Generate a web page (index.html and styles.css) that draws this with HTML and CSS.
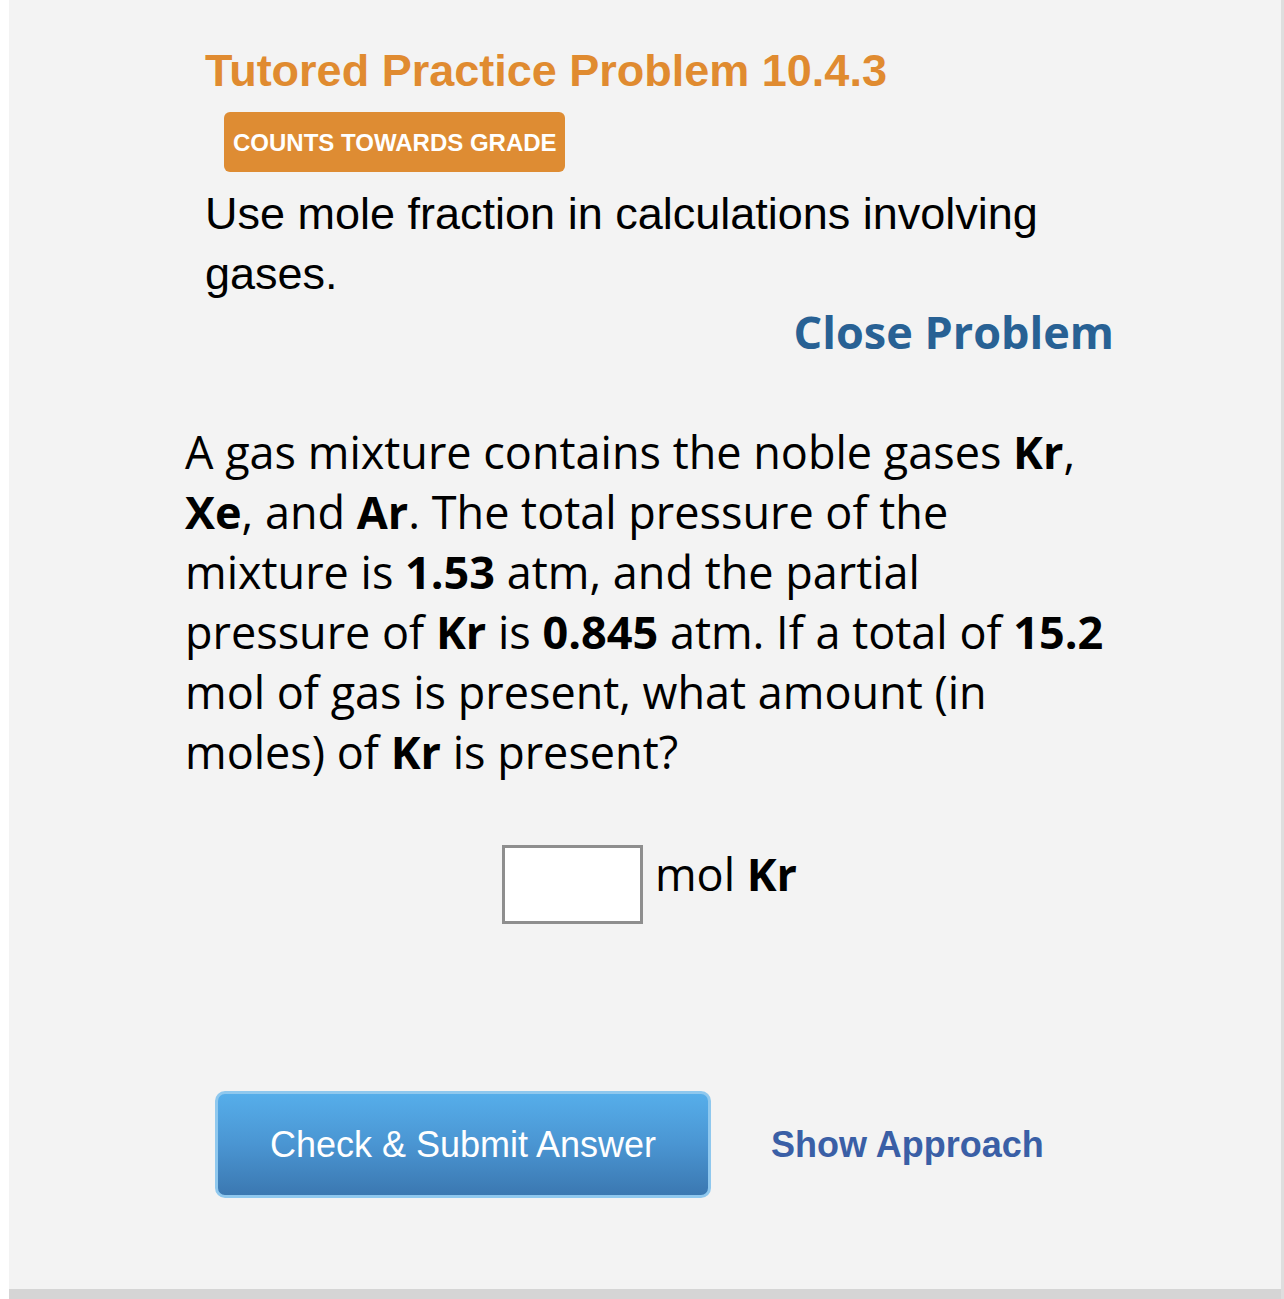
FILE: index.html
```html
<!DOCTYPE html>
<html lang="en">
<head>
<meta charset="utf-8">
<title>Tutored Practice Problem 10.4.3</title>
<link rel="stylesheet" href="styles.css">
</head>
<body>
<div class="page">
  <main class="panel">
    <div class="content">
      <header class="header">
        <h1 class="title">Tutored Practice Problem 10.4.3</h1>
        <span class="badge">COUNTS TOWARDS GRADE</span>
        <p class="objective">Use mole fraction in calculations involving gases.</p>
      </header>
      <div class="close-row"><a class="close-link" href="#">Close Problem</a></div>
      <p class="question">A gas mixture contains the noble gases <b>Kr</b>, <b>Xe</b>, and <b>Ar</b>. The total pressure of the mixture is <b>1.53</b> atm, and the partial pressure of <b>Kr</b> is <b>0.845</b> atm. If a total of <b>15.2</b> mol of gas is present, what amount (in moles) of <b>Kr</b> is present?</p>
      <div class="answer-row">
        <input class="answer-input" type="text" aria-label="answer">
        <span class="unit">mol <b>Kr</b></span>
      </div>
      <div class="actions">
        <button class="submit-btn" type="button">Check &amp; Submit Answer</button>
        <a class="approach-link" href="#">Show Approach</a>
      </div>
    </div>
  </main>
  <div class="edge"></div>
</div>
</body>
</html>
```
FILE: styles.css
```css
html, body {
  margin: 0;
  padding: 0;
  background: #ffffff;
}
body {
  padding-left: 9px;
}
.page {
  display: flex;
  align-items: flex-start;
}
.panel {
  width: 1272px;
  height: 1289px;
  background: #f3f3f3;
  border-bottom: 10px solid #d5d5d5;
}
.edge {
  width: 3px;
  height: 1299px;
  background: #dedede;
}
.content {
  margin-left: 176px;
  width: 929px;
}
.header {
  padding-left: 20px;
  padding-top: 45px;
}
.title {
  margin: 0;
  font-family: "Liberation Sans", Arial, sans-serif;
  font-weight: 700;
  font-size: 45px;
  line-height: 52px;
  color: #e08b30;
}
.badge {
  display: inline-block;
  margin-top: 15px;
  margin-left: 19px;
  height: 60px;
  box-sizing: border-box;
  padding: 2px 8px 0 9px;
  line-height: 58px;
  border-radius: 6px;
  background: #de8c33;
  color: #ffffff;
  font-family: "Liberation Sans", Arial, sans-serif;
  font-weight: 700;
  font-size: 24px;
}
.objective {
  margin: 12px 0 0 0;
  font-family: "Liberation Sans", Arial, sans-serif;
  font-size: 45px;
  line-height: 60px;
  color: #000000;
}
.close-row {
  margin-top: -2px;
  text-align: right;
}
.close-link {
  font-family: "Open Sans", sans-serif;
  font-weight: 700;
  font-size: 45px;
  line-height: 60px;
  color: #286194;
  text-decoration: none;
}
.question {
  margin: 60px 0 0 0;
  font-family: "Open Sans", sans-serif;
  font-size: 45px;
  line-height: 60px;
  color: #000000;
}
.question b, .unit b {
  font-weight: 700;
}
.answer-row {
  margin-top: 63px;
  display: flex;
  justify-content: center;
  align-items: flex-start;
  gap: 12px;
}
.answer-input {
  width: 141px;
  height: 79px;
  box-sizing: border-box;
  border: 3px solid #8e8e8e;
  background: #ffffff;
  margin: 0;
  padding: 0;
  border-radius: 0;
}
.unit {
  margin-top: -1px;
  font-family: "Open Sans", sans-serif;
  font-size: 45px;
  line-height: 60px;
  color: #000000;
}
.actions {
  margin-top: 167px;
  padding-left: 30px;
  display: flex;
  align-items: center;
  gap: 60px;
}
.submit-btn {
  width: 496px;
  height: 107px;
  box-sizing: border-box;
  border: 3px solid #8fc8ee;
  border-radius: 10px;
  background: linear-gradient(to bottom, #56aeea 0%, #4a95d2 50%, #3b78b1 100%);
  color: #ffffff;
  font-family: "Liberation Sans", Arial, sans-serif;
  font-size: 36px;
  padding: 0;
  margin: 0;
}
.approach-link {
  font-family: "Liberation Sans", Arial, sans-serif;
  font-weight: 700;
  font-size: 36px;
  color: #3a5fa6;
  text-decoration: none;
}
```
